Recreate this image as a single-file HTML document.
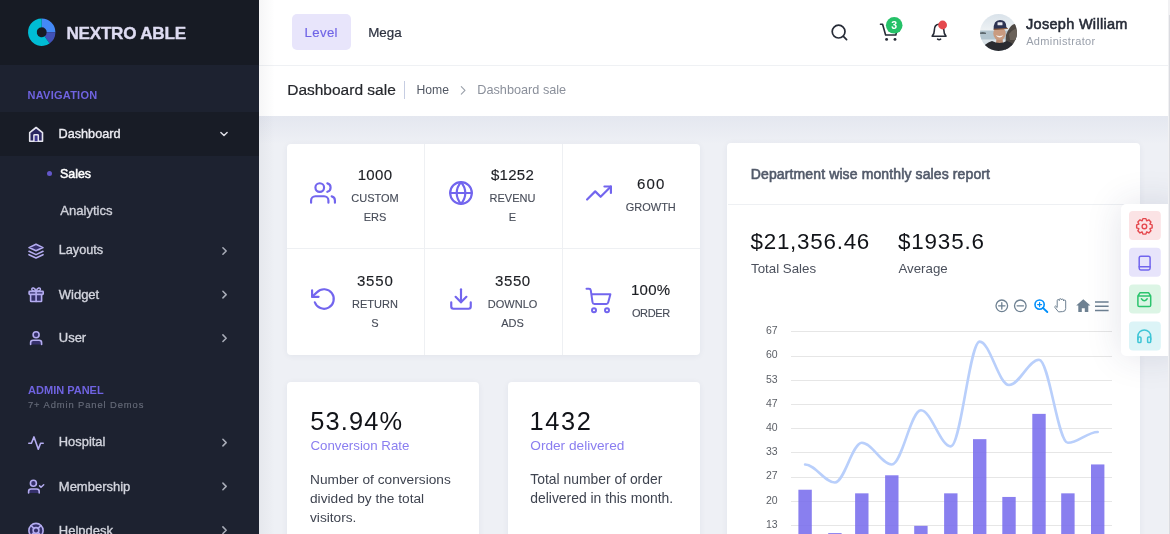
<!DOCTYPE html>
<html><head><meta charset="utf-8"><style>
*{box-sizing:border-box;margin:0;padding:0}
html,body{width:1170px;height:534px;overflow:hidden;font-family:"Liberation Sans",sans-serif;background:#eef0f5}
.abs{position:absolute}
.t{position:absolute;white-space:nowrap;line-height:1}
svg{position:absolute;overflow:visible}
</style></head><body>
<div id="root" style="position:absolute;left:0;top:0;width:1170px;height:534px;overflow:hidden;will-change:transform">
<div class="abs" style="left:259px;top:116px;width:911px;height:418px;background:#eef0f5;"></div>
<div class="abs" style="left:259px;top:116px;width:911px;height:28px;background:linear-gradient(to bottom,rgba(70,90,150,0.06),rgba(70,90,150,0));"></div>
<div class="abs" style="left:287px;top:143.5px;width:412.8px;height:211.5px;background:#fff;border-radius:4px;box-shadow:0 1px 6px rgba(40,50,80,0.06);"></div>
<div class="abs" style="left:423.5px;top:143.5px;width:1px;height:211.5px;background:#eef0f3;"></div>
<div class="abs" style="left:561.5px;top:143.5px;width:1px;height:211.5px;background:#eef0f3;"></div>
<div class="abs" style="left:287px;top:248px;width:413px;height:1px;background:#eef0f3;"></div>
<div class="abs" style="left:287px;top:382.2px;width:192px;height:200px;background:#fff;border-radius:4px;box-shadow:0 1px 6px rgba(40,50,80,0.06);"></div>
<div class="abs" style="left:507.5px;top:382.2px;width:192px;height:200px;background:#fff;border-radius:4px;box-shadow:0 1px 6px rgba(40,50,80,0.06);"></div>
<div class="abs" style="left:727.3px;top:143.4px;width:412.7px;height:450px;background:#fff;border-radius:4px;box-shadow:0 1px 6px rgba(40,50,80,0.06);"></div>
<div class="abs" style="left:727.5px;top:204px;width:412.5px;height:1px;background:#eef0f3;"></div>
<svg style="left:310.3px;top:180.0px" width="26" height="26" viewBox="0 0 24 24" fill="none" stroke="#7265ee" stroke-width="2" stroke-linecap="round" stroke-linejoin="round"><path d="M17 21v-2a4 4 0 0 0-4-4H5a4 4 0 0 0-4 4v2"/><circle cx="9" cy="7" r="4"/><path d="M23 21v-2a4 4 0 0 0-3-3.87"/><path d="M16 3.13a4 4 0 0 1 0 7.75"/></svg>
<svg style="left:448px;top:180.0px" width="26" height="26" viewBox="0 0 24 24" fill="none" stroke="#7265ee" stroke-width="2" stroke-linecap="round" stroke-linejoin="round"><circle cx="12" cy="12" r="10"/><line x1="2" y1="12" x2="22" y2="12"/><path d="M12 2a15.3 15.3 0 0 1 4 10 15.3 15.3 0 0 1-4 10 15.3 15.3 0 0 1-4-10 15.3 15.3 0 0 1 4-10z"/></svg>
<svg style="left:585.6px;top:180.1px" width="26" height="26" viewBox="0 0 24 24" fill="none" stroke="#7265ee" stroke-width="2" stroke-linecap="round" stroke-linejoin="round"><polyline points="23 6 13.5 15.5 8.5 10.5 1 18"/><polyline points="17 6 23 6 23 12"/></svg>
<svg style="left:310.8px;top:286.4px" width="26" height="26" viewBox="0 0 24 24" fill="none" stroke="#7265ee" stroke-width="2" stroke-linecap="round" stroke-linejoin="round"><polyline points="1 4 1 10 7 10"/><path d="M3.51 15a9 9 0 1 0 2.13-9.36L1 10"/></svg>
<svg style="left:448px;top:286.4px" width="26" height="26" viewBox="0 0 24 24" fill="none" stroke="#7265ee" stroke-width="2" stroke-linecap="round" stroke-linejoin="round"><path d="M21 15v4a2 2 0 0 1-2 2H5a2 2 0 0 1-2-2v-4"/><polyline points="7 10 12 15 17 10"/><line x1="12" y1="15" x2="12" y2="3"/></svg>
<svg style="left:0;top:0" width="1170" height="534" fill="none" stroke="#7265ee" stroke-width="2" stroke-linecap="round" stroke-linejoin="round"><path d="M586.5,288.8 H589 Q590.6,288.8 590.8,290.4 L592.5,302.2 Q592.8,303.9 594.5,303.9 H606.4 Q607.9,303.9 608.2,302.4 L610.4,294.2 H591.5"/><circle cx="594" cy="310.2" r="2"/><circle cx="607" cy="310.2" r="2"/></svg>
<div class="t" style="left:375.00px;top:167.30px;font-size:15px;color:#1d1f24;letter-spacing:0.3px;-webkit-text-stroke:0.15px #1d1f24;transform:translateX(-50%);">1000</div>
<div class="t" style="left:375.00px;top:193.09px;font-size:11px;color:#474c58;-webkit-text-stroke:0.12px #474c58;transform:translateX(-50%);">CUSTOM</div>
<div class="t" style="left:375.00px;top:212.19px;font-size:11px;color:#474c58;-webkit-text-stroke:0.12px #474c58;transform:translateX(-50%);">ERS</div>
<div class="t" style="left:512.50px;top:166.90px;font-size:15px;color:#1d1f24;letter-spacing:0.3px;-webkit-text-stroke:0.15px #1d1f24;transform:translateX(-50%);">$1252</div>
<div class="t" style="left:512.50px;top:193.09px;font-size:11px;color:#474c58;-webkit-text-stroke:0.12px #474c58;transform:translateX(-50%);">REVENU</div>
<div class="t" style="left:512.50px;top:211.99px;font-size:11px;color:#474c58;-webkit-text-stroke:0.12px #474c58;transform:translateX(-50%);">E</div>
<div class="t" style="left:651.20px;top:176.30px;font-size:15px;color:#1d1f24;letter-spacing:1.1px;-webkit-text-stroke:0.15px #1d1f24;transform:translateX(-50%);">600</div>
<div class="t" style="left:650.75px;top:202.09px;font-size:11px;color:#474c58;-webkit-text-stroke:0.12px #474c58;transform:translateX(-50%);">GROWTH</div>
<div class="t" style="left:375.30px;top:273.20px;font-size:15px;color:#1d1f24;letter-spacing:0.85px;-webkit-text-stroke:0.15px #1d1f24;transform:translateX(-50%);">3550</div>
<div class="t" style="left:375.00px;top:298.89px;font-size:11px;color:#474c58;-webkit-text-stroke:0.12px #474c58;transform:translateX(-50%);">RETURN</div>
<div class="t" style="left:375.00px;top:317.99px;font-size:11px;color:#474c58;-webkit-text-stroke:0.12px #474c58;transform:translateX(-50%);">S</div>
<div class="t" style="left:512.90px;top:273.20px;font-size:15px;color:#1d1f24;letter-spacing:0.6px;-webkit-text-stroke:0.15px #1d1f24;transform:translateX(-50%);">3550</div>
<div class="t" style="left:512.60px;top:298.89px;font-size:11px;color:#474c58;-webkit-text-stroke:0.12px #474c58;transform:translateX(-50%);">DOWNLO</div>
<div class="t" style="left:512.60px;top:317.99px;font-size:11px;color:#474c58;-webkit-text-stroke:0.12px #474c58;transform:translateX(-50%);">ADS</div>
<div class="t" style="left:650.70px;top:282.20px;font-size:15px;color:#1d1f24;letter-spacing:0.3px;-webkit-text-stroke:0.15px #1d1f24;transform:translateX(-50%);">100%</div>
<div class="t" style="left:650.90px;top:307.99px;font-size:11px;color:#474c58;letter-spacing:-0.35px;-webkit-text-stroke:0.12px #474c58;transform:translateX(-50%);">ORDER</div>
<div class="t" style="left:310.30px;top:408.60px;font-size:25.4px;color:#111318;letter-spacing:1.15px;">53.94%</div>
<div class="t" style="left:310.40px;top:439.14px;font-size:13.3px;color:#8a7ef0;">Conversion Rate</div>
<div class="t" style="left:310.00px;top:473.00px;font-size:13.7px;color:#3f4450;">Number of conversions</div>
<div class="t" style="left:310.00px;top:492.10px;font-size:13.7px;color:#3f4450;">divided by the total</div>
<div class="t" style="left:310.00px;top:510.90px;font-size:13.7px;color:#3f4450;">visitors.</div>
<div class="t" style="left:529.60px;top:408.60px;font-size:25.4px;color:#111318;letter-spacing:1.6px;">1432</div>
<div class="t" style="left:530.30px;top:438.85px;font-size:13.65px;color:#8a7ef0;">Order delivered</div>
<div class="t" style="left:530.30px;top:472.83px;font-size:13.9px;color:#3f4450;">Total number of order</div>
<div class="t" style="left:530.30px;top:491.93px;font-size:13.9px;color:#3f4450;">delivered in this month.</div>
<div class="t" style="left:750.80px;top:167.25px;font-size:14px;color:#525a6a;letter-spacing:0.12px;-webkit-text-stroke:0.6px #525a6a;">Department wise monthly sales report</div>
<div class="t" style="left:750.50px;top:230.64px;font-size:22.4px;color:#111318;letter-spacing:0.75px;">$21,356.46</div>
<div class="t" style="left:751.00px;top:262.24px;font-size:13.3px;color:#4b505c;">Total Sales</div>
<div class="t" style="left:898.00px;top:230.64px;font-size:22.4px;color:#111318;letter-spacing:0.83px;">$1935.6</div>
<div class="t" style="left:898.40px;top:262.24px;font-size:13.3px;color:#4b505c;">Average</div>
<div class="abs" style="left:790.8px;top:331.3px;width:321.2px;height:1px;background:#e6e6e6;"></div>
<div class="t" style="left:777.70px;top:325.21px;font-size:10.5px;color:#5b5f66;transform:translateX(-100%);">67</div>
<div class="abs" style="left:790.8px;top:355.5px;width:321.2px;height:1px;background:#e6e6e6;"></div>
<div class="t" style="left:777.70px;top:349.41px;font-size:10.5px;color:#5b5f66;transform:translateX(-100%);">60</div>
<div class="abs" style="left:790.8px;top:379.7px;width:321.2px;height:1px;background:#e6e6e6;"></div>
<div class="t" style="left:777.70px;top:373.61px;font-size:10.5px;color:#5b5f66;transform:translateX(-100%);">53</div>
<div class="abs" style="left:790.8px;top:403.9px;width:321.2px;height:1px;background:#e6e6e6;"></div>
<div class="t" style="left:777.70px;top:397.81px;font-size:10.5px;color:#5b5f66;transform:translateX(-100%);">47</div>
<div class="abs" style="left:790.8px;top:428.1px;width:321.2px;height:1px;background:#e6e6e6;"></div>
<div class="t" style="left:777.70px;top:422.01px;font-size:10.5px;color:#5b5f66;transform:translateX(-100%);">40</div>
<div class="abs" style="left:790.8px;top:452.3px;width:321.2px;height:1px;background:#e6e6e6;"></div>
<div class="t" style="left:777.70px;top:446.21px;font-size:10.5px;color:#5b5f66;transform:translateX(-100%);">33</div>
<div class="abs" style="left:790.8px;top:476.5px;width:321.2px;height:1px;background:#e6e6e6;"></div>
<div class="t" style="left:777.70px;top:470.41px;font-size:10.5px;color:#5b5f66;transform:translateX(-100%);">27</div>
<div class="abs" style="left:790.8px;top:500.7px;width:321.2px;height:1px;background:#e6e6e6;"></div>
<div class="t" style="left:777.70px;top:494.61px;font-size:10.5px;color:#5b5f66;transform:translateX(-100%);">20</div>
<div class="abs" style="left:790.8px;top:524.9px;width:321.2px;height:1px;background:#e6e6e6;"></div>
<div class="t" style="left:777.70px;top:518.81px;font-size:10.5px;color:#5b5f66;transform:translateX(-100%);">13</div>
<svg style="left:0;top:0" width="1170" height="534" viewBox="0 0 1170 534"><rect x="798.40" y="489.72" width="13.4" height="49.28" fill="#7468ec" fill-opacity="0.85"/><rect x="828.20" y="533.07" width="13.4" height="5.93" fill="#7468ec" fill-opacity="0.85"/><rect x="855.10" y="493.34" width="13.4" height="45.66" fill="#7468ec" fill-opacity="0.85"/><rect x="885.10" y="475.28" width="13.4" height="63.72" fill="#7468ec" fill-opacity="0.85"/><rect x="914.20" y="525.84" width="13.4" height="13.16" fill="#7468ec" fill-opacity="0.85"/><rect x="944.10" y="493.34" width="13.4" height="45.66" fill="#7468ec" fill-opacity="0.85"/><rect x="973.00" y="439.16" width="13.4" height="99.84" fill="#7468ec" fill-opacity="0.85"/><rect x="1002.30" y="496.95" width="13.4" height="42.05" fill="#7468ec" fill-opacity="0.85"/><rect x="1032.30" y="413.87" width="13.4" height="125.13" fill="#7468ec" fill-opacity="0.85"/><rect x="1061.20" y="493.34" width="13.4" height="45.66" fill="#7468ec" fill-opacity="0.85"/><rect x="1091.00" y="464.44" width="13.4" height="74.56" fill="#7468ec" fill-opacity="0.85"/><path d="M805.10,464.44 C815.53,464.44 824.47,482.50 834.90,482.50 C844.32,482.50 852.39,442.77 861.80,442.77 C872.30,442.77 881.30,464.44 891.80,464.44 C901.99,464.44 910.72,410.26 920.90,410.26 C931.37,410.26 940.34,446.38 950.80,446.38 C960.92,446.38 969.59,341.63 979.70,341.63 C989.96,341.63 998.75,384.98 1009.00,384.98 C1019.50,384.98 1028.50,359.69 1039.00,359.69 C1049.12,359.69 1057.79,442.77 1067.90,442.77 C1078.33,442.77 1087.27,431.93 1097.70,431.93" fill="none" stroke="#b9cffb" stroke-width="2.6" stroke-linecap="round"/></svg>
<div class="abs" style="left:259px;top:0px;width:911px;height:116px;background:#fff;"></div>
<div class="abs" style="left:259px;top:65px;width:911px;height:1px;background:#eff1f4;"></div>
<div class="abs" style="left:292px;top:14px;width:59px;height:36px;background:#e8e5fb;border-radius:5px;"></div>
<div class="t" style="left:304.60px;top:25.73px;font-size:13.2px;color:#7064e6;letter-spacing:0.35px;-webkit-text-stroke:0.15px #7064e6;">Level</div>
<div class="t" style="left:368.20px;top:25.56px;font-size:13.4px;color:#2d3240;-webkit-text-stroke:0.2px #2d3240;">Mega</div>
<div class="t" style="left:287.20px;top:81.98px;font-size:15.5px;color:#25272c;-webkit-text-stroke:0.2px #25272c;">Dashboard sale</div>
<div class="abs" style="left:404px;top:81px;width:1px;height:17.5px;background:#c6cde2;"></div>
<div class="t" style="left:416.50px;top:84.27px;font-size:12.2px;color:#525864;">Home</div>
<div class="t" style="left:477.30px;top:83.85px;font-size:12.7px;color:#8b909b;">Dashboard sale</div>
<svg style="left:0;top:0" width="1170" height="534"><path d="M461.3,86.7 L465,90.4 L461.3,94.1" fill="none" stroke="#9aa0aa" stroke-width="1.1" stroke-linecap="round" stroke-linejoin="round"/></svg>
<div class="t" style="left:1026.00px;top:17.33px;font-size:14.5px;color:#262b37;letter-spacing:0.3px;-webkit-text-stroke:0.55px #262b37;">Joseph William</div>
<div class="t" style="left:1026.20px;top:35.89px;font-size:11px;color:#9aa0ab;letter-spacing:0.35px;">Administrator</div>
<svg style="left:0;top:0" width="1170" height="534" fill="none" stroke-linecap="round" stroke-linejoin="round"><circle cx="838.6" cy="31.6" r="6.4" stroke="#262b36" stroke-width="1.7"/><path d="M843.4,36.4 L846.6,39.6" stroke="#262b36" stroke-width="1.7"/><path d="M880.5,24.3 H882.6 L885.6,35 H895.8 L897.3,28.5" stroke="#262b36" stroke-width="1.6"/><circle cx="886.6" cy="39.4" r="1.45" fill="#262b36" stroke="none"/><circle cx="895" cy="39.4" r="1.45" fill="#262b36" stroke="none"/><circle cx="894.2" cy="25.3" r="8.3" fill="#25c168" stroke="none"/><path d="M932.2,36.2 H946 C944.2,34.5 943.9,32.8 943.9,30.5 C943.9,26.8 942.2,24.2 939.1,24.2 C936,24.2 934.3,26.8 934.3,30.5 C934.3,32.8 934,34.5 932.2,36.2 Z" stroke="#262b36" stroke-width="1.6"/><path d="M937.6,39.2 Q939.1,40.4 940.6,39.2" stroke="#262b36" stroke-width="1.6"/><circle cx="942.6" cy="25" r="4.4" fill="#e5484d" stroke="none"/></svg>
<div class="t" style="left:894.20px;top:20.41px;font-size:10.5px;color:#ffffff;font-weight:700;transform:translateX(-50%);">3</div>
<svg style="left:979.8px;top:14.3px" width="37" height="37" viewBox="0 0 37 37"><defs><clipPath id="avc"><circle cx="18.5" cy="18.5" r="18.5"/></clipPath><linearGradient id="sky" x1="0" y1="0" x2="0" y2="1"><stop offset="0" stop-color="#d9e2ea"/><stop offset="0.45" stop-color="#eef2f4"/><stop offset="1" stop-color="#c9d6de"/></linearGradient></defs><g clip-path="url(#avc)"><rect width="37" height="37" fill="url(#sky)"/><rect x="0" y="16.5" width="37" height="9" fill="#b3c5cf"/><path d="M0,18.5 Q3,17.5 6,18.8 L6,20 L0,20 Z" fill="#5e6a70"/><path d="M25,37 L26,21 Q29,13 33,10.5 Q36,9.5 37,10 L37,37 Z" fill="#4d4742"/><path d="M29,20 Q32,16 35,15 L37,16 L37,26 L30,26 Z" fill="#6b625a"/><path d="M16.5,24 L22.5,24 L23,29 L16,29 Z" fill="#b88a70"/><ellipse cx="19.5" cy="19.5" rx="6.2" ry="6.6" fill="#c99b80"/><path d="M13.6,16 Q13.2,6.2 20,6 Q26.5,6.2 26.3,13 L27.8,14.6 L13.6,15.4 Z" fill="#2d3352"/><path d="M13.8,14.8 L27.5,14 L27.9,15 L13.7,16 Z" fill="#8a5a3c"/><rect x="17.5" y="8.2" width="5" height="3" rx="0.5" fill="#e9e9ef"/><path d="M15.8,21.2 Q19.6,25.6 23.4,21.2 Q19.6,22.6 15.8,21.2 Z" fill="#f6f2ee"/><path d="M2,37 Q4,29 12,27 Q19.5,31 27,27 Q35,29 36,37 Z" fill="#2a2b30"/></g></svg>
<svg style="left:0;top:0" width="1170" height="534" fill="none" stroke-linecap="round" stroke-linejoin="round"><circle cx="1001.8" cy="305.8" r="5.8" stroke="#6e8192" stroke-width="1.3"/><path d="M1001.8,302.6 V309 M998.6,305.8 H1005" stroke="#6e8192" stroke-width="1.3"/><circle cx="1020.3" cy="305.8" r="5.8" stroke="#6e8192" stroke-width="1.3"/><path d="M1017.1,305.8 H1023.5" stroke="#6e8192" stroke-width="1.3"/><circle cx="1039.6" cy="304.6" r="4.6" stroke="#008ffb" stroke-width="1.6"/><path d="M1042.9,307.9 L1047.3,312" stroke="#008ffb" stroke-width="1.9"/><path d="M1039.6,302.6 V306.6 M1037.6,304.6 H1041.6" stroke="#008ffb" stroke-width="1.2"/><path d="M1058.3,311.6 L1055,307.6 Q1054.3,306.4 1055.5,306 L1057.2,307.5 V300.6 Q1057.2,299.5 1058.3,299.5 Q1059.3,299.5 1059.3,300.6 V299.6 Q1059.3,298.7 1060.3,298.7 Q1061.4,298.7 1061.4,299.6 V300 Q1061.4,299.1 1062.5,299.1 Q1063.5,299.1 1063.5,300 V301 Q1063.5,300.1 1064.6,300.1 Q1065.7,300.1 1065.7,301 V308.5 Q1065.7,311.6 1063,311.6 Z" stroke="#6e8192" stroke-width="1"/><path d="M1076.2,305.6 L1083.3,299.2 L1090.4,305.6 H1088.3 V312 H1084.8 V308.2 H1081.8 V312 H1078.3 V305.6 Z" fill="#6e8192" stroke="none"/><path d="M1095,302 H1108.6 M1095,306.2 H1108.6 M1095,310.4 H1108.6" stroke="#6e8192" stroke-width="1.5" stroke-linecap="butt"/></svg>
<div class="abs" style="left:1121.3px;top:203.7px;width:60px;height:152.6px;background:#fff;border-radius:5px 0 0 5px;box-shadow:0 0 36px rgba(40,50,90,0.13);"></div>
<svg style="left:0;top:0" width="1170" height="534" fill="none" stroke-linecap="round" stroke-linejoin="round"><rect x="1129" y="211.0" width="31.8" height="29" rx="4" fill="#fbe3e5"/><rect x="1129" y="247.8" width="31.8" height="29" rx="4" fill="#e7e4fb"/><rect x="1129" y="284.6" width="31.8" height="29" rx="4" fill="#dcf5e5"/><rect x="1129" y="321.4" width="31.8" height="29" rx="4" fill="#dcf4f7"/></svg>
<svg style="left:0;top:0" width="1170" height="534" fill="none" stroke-linecap="round" stroke-linejoin="round"><path d="M1142.15,220.84 L1142.89,218.65 L1145.91,218.65 L1146.65,220.84 L1146.74,220.88 L1148.82,219.85 L1150.95,221.98 L1149.92,224.06 L1149.96,224.15 L1152.15,224.89 L1152.15,227.91 L1149.96,228.65 L1149.92,228.74 L1150.95,230.82 L1148.82,232.95 L1146.74,231.92 L1146.65,231.96 L1145.91,234.15 L1142.89,234.15 L1142.15,231.96 L1142.06,231.92 L1139.98,232.95 L1137.85,230.82 L1138.88,228.74 L1138.84,228.65 L1136.65,227.91 L1136.65,224.89 L1138.84,224.15 L1138.88,224.06 L1137.85,221.98 L1139.98,219.85 L1142.06,220.88 Z" stroke="#e5484d" stroke-width="1.4"/><circle cx="1144.4" cy="226.4" r="2.3" stroke="#e5484d" stroke-width="1.4"/><rect x="1139.2" y="256.2" width="10.9" height="13.7" rx="1.6" stroke="#7265ee" stroke-width="1.5"/><path d="M1139.2,266.7 H1150.1" stroke="#7265ee" stroke-width="1.5"/><path d="M1137.9,296 L1139.9,292.8 H1148.7 L1150.7,296 V305.2 Q1150.7,306.6 1149.3,306.6 H1139.3 Q1137.9,306.6 1137.9,305.2 Z M1137.9,296 H1150.7" stroke="#2bc46d" stroke-width="1.5"/><path d="M1141.4,298.8 Q1144.3,302.6 1147.2,298.8" stroke="#2bc46d" stroke-width="1.5"/><path d="M1137.9,339.5 V336.3 A6.4,6.4 0 0 1 1150.7,336.3 V339.5" stroke="#3ec5d6" stroke-width="1.5"/><rect x="1137.9" y="337" width="3.1" height="5.6" rx="1.1" stroke="#3ec5d6" stroke-width="1.5"/><rect x="1147.6" y="337" width="3.1" height="5.6" rx="1.1" stroke="#3ec5d6" stroke-width="1.5"/></svg>
<div class="abs" style="left:1167.5px;top:0px;width:2.5px;height:534px;background:#f1f1f3;"></div>
<div class="abs" style="left:1168.5px;top:14.6px;width:1.5px;height:519.4px;background:#dadbe0;"></div>
<div class="abs" style="left:259px;top:0px;width:16px;height:534px;background:linear-gradient(to right,rgba(20,25,40,0.04),rgba(20,25,40,0));"></div>
<div class="abs" style="left:0px;top:0px;width:259px;height:534px;background:#1d2230;"></div>
<div class="abs" style="left:0px;top:0px;width:259px;height:65px;background:#171b24;"></div>
<div class="abs" style="left:0px;top:112px;width:259px;height:43.5px;background:#181c26;"></div>
<div class="t" style="left:66.40px;top:24.62px;font-size:17.1px;color:#dedcf2;font-weight:700;letter-spacing:-0.22px;-webkit-text-stroke:0.4px #dedcf2;">NEXTRO ABLE</div>
<div class="t" style="left:27.50px;top:90.09px;font-size:11px;color:#6f63e0;font-weight:700;letter-spacing:0.25px;">NAVIGATION</div>
<div class="t" style="left:58.50px;top:127.55px;font-size:12.7px;color:#eeeef4;-webkit-text-stroke:0.35px #eeeef4;">Dashboard</div>
<div class="abs" style="left:46.5px;top:171px;width:5px;height:5px;background:#6357c9;border-radius:50%;"></div>
<div class="t" style="left:60.00px;top:167.70px;font-size:12.4px;color:#ffffff;-webkit-text-stroke:0.5px #ffffff;">Sales</div>
<div class="t" style="left:60.20px;top:203.71px;font-size:13.1px;color:#cfd1da;-webkit-text-stroke:0.35px #cfd1da;">Analytics</div>
<div class="t" style="left:58.75px;top:244.35px;font-size:12.7px;color:#d3d5de;-webkit-text-stroke:0.35px #d3d5de;">Layouts</div>
<div class="t" style="left:58.75px;top:287.80px;font-size:13px;color:#d3d5de;-webkit-text-stroke:0.35px #d3d5de;">Widget</div>
<div class="t" style="left:58.75px;top:331.30px;font-size:13px;color:#d3d5de;-webkit-text-stroke:0.35px #d3d5de;">User</div>
<div class="t" style="left:28.10px;top:384.79px;font-size:11px;color:#6f63e0;font-weight:700;">ADMIN PANEL</div>
<div class="t" style="left:28.00px;top:399.54px;font-size:9.4px;color:#666b79;letter-spacing:0.9px;-webkit-text-stroke:0.15px #666b79;">7+ Admin Panel Demos</div>
<div class="t" style="left:58.80px;top:435.78px;font-size:12.9px;color:#d3d5de;-webkit-text-stroke:0.35px #d3d5de;">Hospital</div>
<div class="t" style="left:58.80px;top:480.00px;font-size:13px;color:#d3d5de;-webkit-text-stroke:0.35px #d3d5de;">Membership</div>
<div class="t" style="left:58.80px;top:523.90px;font-size:13px;color:#d3d5de;-webkit-text-stroke:0.35px #d3d5de;">Helpdesk</div>
<svg style="left:0;top:0" width="260" height="65"><path d="M41.70,18.50 A13.7,13.7 0 0 1 55.40,32.20 L46.70,32.20 A5.0,5.0 0 0 0 41.70,27.20 Z" fill="#4489f6"/><path d="M55.40,32.20 A13.7,13.7 0 0 1 49.56,43.42 L44.57,36.30 A5.0,5.0 0 0 0 46.70,32.20 Z" fill="#4152b8"/><path d="M49.56,43.42 A13.7,13.7 0 1 1 41.70,18.50 L41.70,27.20 A5.0,5.0 0 1 0 44.57,36.30 Z" fill="#00bcd4"/></svg>
<svg style="left:0;top:0" width="260" height="534" fill="none" stroke-linecap="round" stroke-linejoin="round"><path d="M29.7,141.2 V132.6 L36.1,127.5 L42.5,132.6 V141.2 Z" fill="#2a2660" stroke="#e6e6ef" stroke-width="1.6"/><path d="M33.9,141.2 V135.4 Q33.9,134.7 34.6,134.7 H37.6 Q38.3,134.7 38.3,135.4 V141.2" fill="#3d3590" stroke="#e6e6ef" stroke-width="1.5"/><path d="M36,244.2 L43,247.6 L36,250.8 L29,247.6 Z" fill="#35306b" stroke="#b4acf0" stroke-width="1.6"/><path d="M29,251.3 L36,254.6 L43,251.3" stroke="#b4acf0" stroke-width="1.6"/><path d="M29,254.7 L36,257.9 L43,254.7" stroke="#b4acf0" stroke-width="1.6"/><rect x="30.6" y="294.2" width="11" height="7.3" rx="0.6" fill="#35306b" stroke="#b4acf0" stroke-width="1.6"/><rect x="29.1" y="291.4" width="14.1" height="3" rx="0.6" fill="#35306b" stroke="#b4acf0" stroke-width="1.6"/><path d="M36.1,291.4 V301.5" stroke="#b4acf0" stroke-width="1.6"/><path d="M36.1,291.4 C35,287.5 31.8,287 31.8,289.2 C31.8,290.6 34,291.4 36.1,291.4 C38.2,291.4 40.4,290.6 40.4,289.2 C40.4,287 37.2,287.5 36.1,291.4" stroke="#b4acf0" stroke-width="1.5"/><circle cx="36.1" cy="334.8" r="3" fill="#35306b" stroke="#b4acf0" stroke-width="1.6"/><path d="M30.6,344.5 V342.8 Q30.6,340.3 33.1,340.3 H39.1 Q41.6,340.3 41.6,342.8 V344.5" fill="#35306b" stroke="#b4acf0" stroke-width="1.6"/><path d="M28.8,443.3 H31.4 L34,436.9 L38.3,449.2 L40.6,443.3 H43.2" stroke="#b4acf0" stroke-width="1.6"/><circle cx="33.4" cy="483.2" r="3" fill="#35306b" stroke="#b4acf0" stroke-width="1.6"/><path d="M28.6,493 V491.4 Q28.6,489 31,489 H36.8 Q39.2,489 39.2,491.4 V493" fill="#35306b" stroke="#b4acf0" stroke-width="1.6"/><path d="M39.6,485.9 L41,487.3 L43.7,484.7" stroke="#b4acf0" stroke-width="1.5"/><circle cx="36" cy="530.5" r="7.1" fill="#35306b" stroke="#b4acf0" stroke-width="1.6"/><circle cx="36" cy="530.5" r="2.9" fill="#35306b" stroke="#b4acf0" stroke-width="1.6"/><path d="M33.9,528.4 L31,525.5 M38.1,528.4 L41,525.5 M33.9,532.6 L31,535.5 M38.1,532.6 L41,535.5" stroke="#b4acf0" stroke-width="1.6"/><path d="M220.9,132.5 L224,135.5 L227.1,132.5" stroke="#dcdce4" stroke-width="1.5"/><path d="M222.9,247.7 L226.2,251.0 L222.9,254.3" stroke="#a9adb8" stroke-width="1.5"/><path d="M222.9,291.3 L226.2,294.6 L222.9,297.9" stroke="#a9adb8" stroke-width="1.5"/><path d="M222.9,334.9 L226.2,338.2 L222.9,341.5" stroke="#a9adb8" stroke-width="1.5"/><path d="M222.9,439.3 L226.2,442.6 L222.9,445.9" stroke="#a9adb8" stroke-width="1.5"/><path d="M222.9,483.1 L226.2,486.4 L222.9,489.7" stroke="#a9adb8" stroke-width="1.5"/><path d="M222.9,526.9 L226.2,530.2 L222.9,533.5" stroke="#a9adb8" stroke-width="1.5"/></svg>
</div>
</body></html>
